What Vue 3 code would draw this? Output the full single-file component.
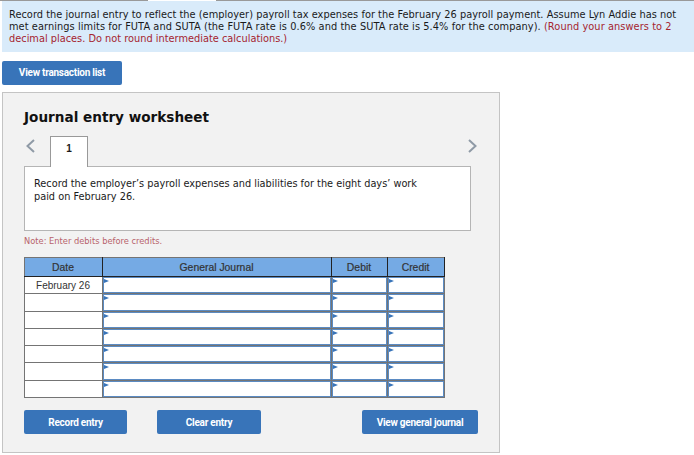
<script setup>
const rows = [
  { date: 'February 26', h: 17 },
  { date: '', h: 18 },
  { date: '', h: 17 },
  { date: '', h: 17 },
  { date: '', h: 17 },
  { date: '', h: 18 },
  { date: '', h: 17 },
]
</script>

<template>
  <div class="page">
    <div class="topline"><span class="gap"></span></div>
    <div class="prompt">
      <span class="line l1">Record the journal entry to reflect the (employer) payroll tax expenses for the February 26 payroll payment. Assume Lyn Addie has not</span>
      <span class="line l2">met earnings limits for FUTA and SUTA (the FUTA rate is 0.6% and the SUTA rate is 5.4% for the company). <span class="red">(Round your answers to 2</span></span>
      <span class="line red">decimal places. Do not round intermediate calculations.)</span>
    </div>
    <button class="btn list-btn">View transaction list</button>
    <section class="panel">
      <h2>Journal entry worksheet</h2>
      <div class="tabs">
        <svg class="chev" width="12" height="16" viewBox="0 0 12 16"><path d="M10 2 3.500 8l6.500 6" fill="none" stroke="#8f9aa6" stroke-width="2" /></svg>
        <div class="tab">1</div>
        <svg class="chev next" width="12" height="16" viewBox="0 0 12 16"><path d="M2 2l6.500 6L2 14" fill="none" stroke="#8f9aa6" stroke-width="2" /></svg>
      </div>
      <div class="instruction">
        Record the employer’s payroll expenses and liabilities for the eight days’ work<br />paid on February 26.
      </div>
      <p class="note">Note: Enter debits before credits.</p>
      <table>
        <colgroup>
          <col class="c1" /><col class="c2" /><col class="c3" /><col class="c4" />
        </colgroup>
        <thead>
          <tr><th>Date</th><th>General Journal</th><th>Debit</th><th>Credit</th></tr>
        </thead>
        <tbody>
          <tr v-for="(r, i) in rows" :key="i" :style="{ height: r.h + 'px' }">
            <td class="date">{{ r.date }}</td>
            <td v-for="n in 3" :key="n" class="entry"><div class="field"><i class="tri"></i></div></td>
          </tr>
        </tbody>
      </table>
      <div class="actions">
        <button class="btn record">Record entry</button>
        <button class="btn clear">Clear entry</button>
        <button class="btn journal">View general journal</button>
      </div>
    </section>
  </div>
</template>

<style>
html, body { margin: 0; background: #fff; }
</style>

<style scoped>
.page {
  width: 694px;
  height: 455px;
  overflow: hidden;
  font-family: "DejaVu Sans", sans-serif;
  color: #1a1a1a;
}
.topline {
  height: 1px;
  background: #999;
  position: relative;
}
.gap {
  position: absolute;
  left: 148px;
  width: 68px;
  top: 0;
  height: 1px;
  background: #fff;
}
.prompt {
  margin-left: 2px;
  height: 51px;
  box-sizing: border-box;
  padding: 8px 0 0 7px;
  background: #d9ebfa;
  font-size: 9.8px;
  line-height: 12px;
  white-space: nowrap;
}
.line { display: block; }
.l1 { letter-spacing: 0.03px; }
.l2 { letter-spacing: 0.075px; }
.red { color: #a5242f; }
.btn {
  display: block;
  height: 24px;
  padding: 0 0 1px;
  border: 0;
  border-radius: 2px;
  background: #3874b9;
  color: #fff;
  font-family: Roboto, sans-serif;
  font-size: 10px;
  font-weight: 700;
  letter-spacing: -0.25px;
}
.list-btn {
  width: 120px;
  margin: 9px 0 0 2px;
}
.panel {
  width: 498px;
  height: 361px;
  box-sizing: border-box;
  margin: 7px 0 0 2px;
  padding: 0 0 0 21px;
  border: 1px solid #c4c4c4;
  background: #f2f2f2;
}
h2 {
  margin: 14px 0 0 0;
  font-size: 13.6px;
  line-height: 20px;
  font-weight: 700;
  color: #111;
}
.tabs {
  display: flex;
  align-items: flex-start;
  height: 30px;
  width: 447px;
  margin-top: 9px;
}
.chev { margin: 2px 0 0 0; flex: none; }
.tab {
  width: 36px;
  height: 30px;
  margin-left: 14px;
  border: 1px solid #999;
  border-bottom: 0;
  background: #fff;
  font-family: "Liberation Sans", sans-serif;
  font-size: 10px;
  font-weight: 700;
  line-height: 24px;
  text-align: center;
  position: relative;
  z-index: 1;
}
.next { margin-left: auto; margin-right: -8px; }
.instruction {
  width: 447px;
  height: 65px;
  box-sizing: border-box;
  padding: 10px 0 0 9px;
  border: 1px solid #b5b5b5;
  background: #fff;
  font-size: 9.75px;
  line-height: 13px;
  white-space: nowrap;
}
.note {
  margin: 4px 0 0;
  font-size: 8.3px;
  line-height: 12px;
  color: #b8636c;
}
table {
  width: 420px;
  margin: 10px 0 0 -0.5px;
  border-collapse: collapse;
  table-layout: fixed;
  font-family: "Liberation Sans", sans-serif;
  font-size: 10px;
  border: 1px solid #747474;
}
.c1 { width: 78px; }
.c2 { width: 229px; }
.c3 { width: 56px; }
.c4 { width: 57px; }
th {
  height: 18px;
  padding: 0;
  background: #75aae4;
  color: #333;
  font-size: 10.4px;
  font-weight: 400;
  border: 1px solid #747474;
  border-right-color: #222;
  border-bottom-color: #222;
  -webkit-text-stroke: 0.2px #333;
}
td {
  padding: 0;
  background: #fff;
  border: 1px solid #747474;
}
.date {
  text-align: center;
  color: #333;
}
.entry { position: relative; }
.field {
  position: absolute;
  inset: 0;
  border: 1.5px solid #5b8bc3;
}
.tri {
  position: absolute;
  left: 0;
  top: 1px;
  width: 0;
  height: 0;
  border-left: 5px solid #3874b9;
  border-top: 2.5px solid transparent;
  border-bottom: 2.5px solid transparent;
}
.actions {
  display: flex;
  margin-top: 12px;
}
.actions .btn { padding: 0; }
.record { width: 103px; }
.clear { width: 104px; margin-left: 30px; }
.journal { width: 116px; margin-left: 101px; }
</style>
